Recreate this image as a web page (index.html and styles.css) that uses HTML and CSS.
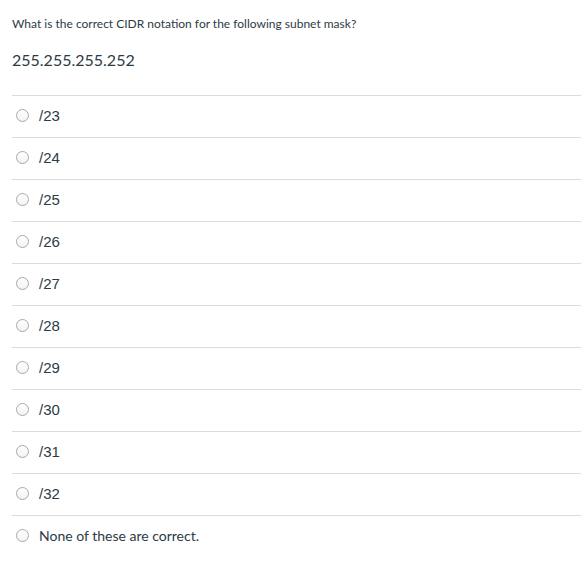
FILE: index.html
```html
<!DOCTYPE html>
<html>
<head>
<meta charset="utf-8">
<link rel="stylesheet" href="styles.css">
</head>
<body>
<div class="quiz">
  <div class="question">
    <p class="prompt">What is the correct CIDR notation for the following subnet mask?</p>
    <p class="mask">255.255.255.252</p>
  </div>
  <div class="answers">
    <label class="answer"><span class="radio"></span><span class="num">/23</span></label>
    <label class="answer"><span class="radio"></span><span class="num">/24</span></label>
    <label class="answer"><span class="radio"></span><span class="num">/25</span></label>
    <label class="answer"><span class="radio"></span><span class="num">/26</span></label>
    <label class="answer"><span class="radio"></span><span class="num">/27</span></label>
    <label class="answer"><span class="radio"></span><span class="num">/28</span></label>
    <label class="answer"><span class="radio"></span><span class="num">/29</span></label>
    <label class="answer"><span class="radio"></span><span class="num">/30</span></label>
    <label class="answer"><span class="radio"></span><span class="num">/31</span></label>
    <label class="answer"><span class="radio"></span><span class="num">/32</span></label>
    <label class="answer"><span class="radio"></span><span class="txt">None of these are correct.</span></label>
  </div>
</div>
</body>
</html>
```
FILE: styles.css
```css
html, body {
  margin: 0;
  padding: 0;
  background: #fff;
}
body {
  font-family: Lato, "Liberation Sans", sans-serif;
  color: #2d3b45;
}
.quiz {
  padding: 0 0 0 12px;
}
.question {
  padding-top: 16px;
  height: 95px;
  box-sizing: border-box;
}
.prompt {
  margin: 0;
  font-size: 12px;
  line-height: 16px;
}
.mask {
  margin: 18px 0 0;
  font-size: 16px;
  line-height: 20px;
}
.answers {
  display: flex;
  flex-direction: column;
}
.answer {
  display: flex;
  align-items: center;
  box-sizing: border-box;
  height: 42px;
  padding: 0 0 2px 4px;
  border-top: 1px solid #dcdcdc;
}
.radio {
  width: 11px;
  height: 11px;
  border: 1px solid #a9a9a9;
  border-radius: 50%;
  background: linear-gradient(#fff, #f3f3f3);
  box-sizing: content-box;
  margin-right: 10px;
  flex: none;
}
.num {
  font-family: "Liberation Sans", Arial, sans-serif;
  font-size: 15px;
  color: #2d3b45;
}
.txt {
  font-size: 14px;
}
```
